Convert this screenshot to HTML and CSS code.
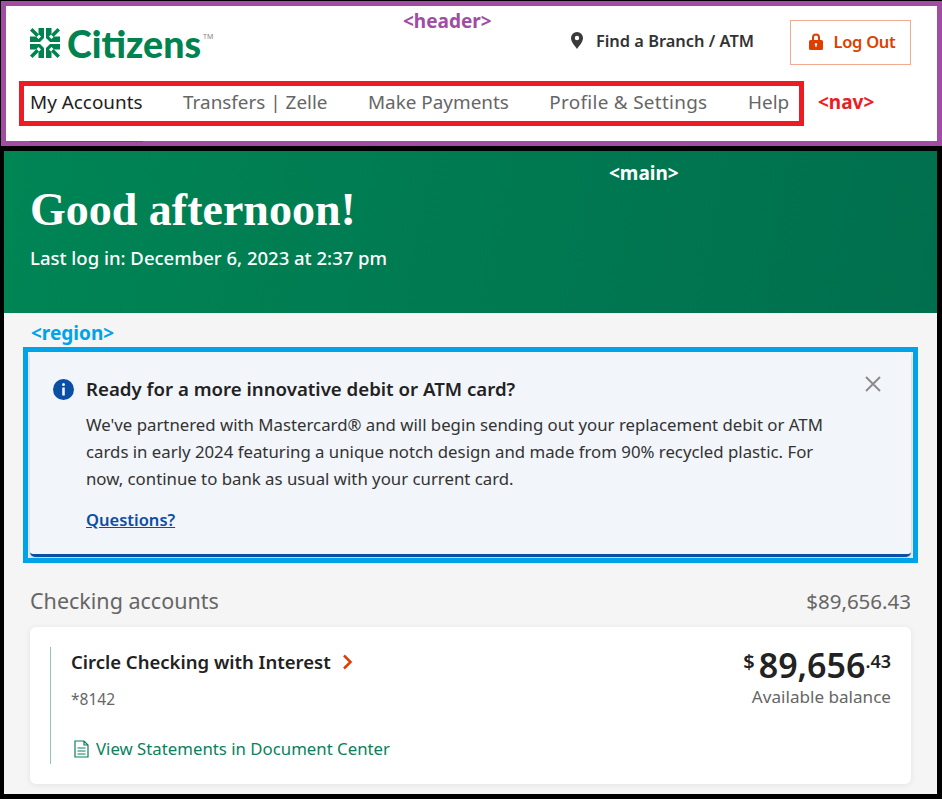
FILE: index.html
```html
<!DOCTYPE html>
<html lang="en">
  <head>
    <meta charset="utf-8">
    <title>Citizens - My Accounts</title>
    <link rel="stylesheet" href="styles.css">
  </head>
  <body>
    <header class="site-header">
      <span class="tag tag-header">&lt;header&gt;</span>
      <div class="top-row">
        <a class="logo">
          <svg class="logo-mark" width="30" height="30" viewBox="0 0 30 30">
            <g id="petal">
              <path d="M0 2.500 L2.500 0 L9 6.500 L6.500 9 z"/>
              <path d="M8.500 0 H14 V10 L10 14 H0 V8.500 H6 L8.500 11 L11 8.500 L8.500 6 z"/>
            </g>
            <use href="#petal" transform="matrix(-1 0 0 1 30 0)"/>
            <use href="#petal" transform="matrix(1 0 0 -1 0 30)"/>
            <use href="#petal" transform="matrix(-1 0 0 -1 30 30)"/>
          </svg>
          <span class="logo-name">Citizens</span><span class="logo-tm">TM</span>
        </a>
        <a class="branch-link">
          <svg width="12" height="17" viewBox="0 0 12 17"><path d="M6 0 a6 6 0 0 1 6 6 c0 4 -4 8 -6 11 c-2 -3 -6 -7 -6 -11 a6 6 0 0 1 6 -6 z M6 3.800 a2.200 2.200 0 1 0 0 4.400 a2.200 2.200 0 0 0 0 -4.400 z" fill-rule="evenodd"/></svg>
          Find a Branch / ATM
        </a>
        <a class="logout">
          <svg width="14" height="17" viewBox="0 0 14 17"><path d="M3 7 V4.500 a4 4 0 0 1 8 0 V7 h1.500 a1.500 1.500 0 0 1 1.500 1.500 v7 a1.500 1.500 0 0 1 -1.500 1.500 h-11 a1.500 1.500 0 0 1 -1.500 -1.500 v-7 a1.500 1.500 0 0 1 1.500 -1.500 z M5 7 h4 V4.500 a2 2 0 0 0 -4 0 z M7 10 a1.300 1.300 0 0 0 -0.600 2.400 v1.600 h1.200 v-1.600 a1.300 1.300 0 0 0 -0.600 -2.400 z" fill-rule="evenodd"/></svg>
          Log Out
        </a>
      </div>
      <div class="nav-row">
        <nav class="main-nav">
          <a class="active">My Accounts</a>
          <a>Transfers | Zelle</a>
          <a>Make Payments</a>
          <a class="wide">Profile &amp; Settings</a>
          <a>Help</a>
        </nav>
        <span class="tag tag-nav">&lt;nav&gt;</span>
      </div>
    </header>

    <main class="content">
      <span class="tag tag-main">&lt;main&gt;</span>
      <section class="hero">
        <h1>Good afternoon!</h1>
        <p>Last log in: December 6, 2023 at 2:37 pm</p>
      </section>

      <div class="accounts">
        <span class="tag tag-region">&lt;region&gt;</span>
        <div class="region">
          <div class="notice">
            <svg class="notice-icon" width="21" height="21" viewBox="0 0 21 21"><path d="M10.500 0 a10.500 10.500 0 1 1 0 21 a10.500 10.500 0 0 1 0 -21 z M10.500 4 a1.500 1.500 0 1 0 0 3 a1.500 1.500 0 0 0 0 -3 z M9.200 8.500 v8 h2.600 v-8 z" fill-rule="evenodd"/></svg>
            <div class="notice-body">
              <h2>Ready for a more innovative debit or ATM card?</h2>
              <p>We've partnered with Mastercard® and will begin sending out your replacement debit or ATM cards in early 2024 featuring a unique notch design and made from 90% recycled plastic. For now, continue to bank as usual with your current card.</p>
              <a class="questions">Questions?</a>
            </div>
            <svg class="notice-close" width="16" height="16" viewBox="0 0 16 16"><path d="M1 1 L15 15 M15 1 L1 15"/></svg>
          </div>
        </div>

        <div class="group-head">
          <span>Checking accounts</span>
          <span class="group-total">$89,656.43</span>
        </div>

        <article class="account">
          <div class="account-inner">
            <div class="account-info">
              <a class="account-name">Circle Checking with Interest
                <svg width="11" height="16" viewBox="0 0 11 16"><path d="M2 1.500 L8.500 8 L2 14.500"/></svg>
              </a>
              <div class="account-num">*8142</div>
              <a class="statements">
                <svg width="15" height="18" viewBox="0 0 15 18"><path d="M1 1 h9 l4 4 v12 h-13 z M10 1 v4 h4 M3.500 8 h8 M3.500 11 h8 M3.500 14 h8"/></svg>
                View Statements in Document Center
              </a>
            </div>
            <div class="balance">
              <div class="amount"><span class="cur">$</span><span class="whole">89,656</span><span class="cents">.43</span></div>
              <div class="balance-label">Available balance</div>
            </div>
          </div>
        </article>
      </div>
    </main>
  </body>
</html>
```

FILE: styles.css
```css
html { background: #000; }
body { margin: 0; height: 799px; overflow: hidden; color: #222; font-family: "Noto Sans", sans-serif; }
a { cursor: pointer; }

/* the coloured labels and outlines drawn over the page */
.tag { position: absolute; font-size: 19px; font-weight: 700; line-height: 24px; white-space: nowrap; }
.tag-header { left: 397px; top: 3px; color: #a04da3; }
.tag-nav { left: 812px; top: 84px; color: #ed1c24; }
.tag-main { left: 605px; top: 10px; color: #fff; }
.tag-region { left: 27px; top: 8px; color: #00a2e8; }

.site-header { position: relative; height: 135px; margin: 1px 0 5px 1px; background: #fff; border: 5px solid #a04da3; }
.top-row { display: flex; align-items: center; height: 45px; padding: 14px 26px 0 24px; }
.logo { display: flex; align-items: center; color: #00834f; padding-top: 1px; }
.logo-mark { fill: #00834f; margin-right: 7px; }
.logo-name { font-family: "Lato", sans-serif; font-weight: 900; font-size: 37.500px; line-height: 45px; }
.logo-tm { font-size: 7px; margin: -14px 0 0 2px; color: #888; }
.branch-link { display: flex; align-items: center; gap: 13px; margin-left: auto; font-size: 16.400px; font-weight: 600; color: #333; padding-bottom: 4px; }
.branch-link svg { fill: #3a3a3a; }
.logout { display: flex; align-items: center; justify-content: center; gap: 11px; width: 116px; height: 41px; margin-left: 36px; border: 1px solid #f0ab92; font-size: 16.500px; letter-spacing: -.3px; font-weight: 600; color: #de3f00; padding: 0 0 2px 3px; }
.logout svg { fill: #de3f00; }

.nav-row { display: flex; align-items: center; margin-top: 16px; padding-left: 13px; }
.main-nav { display: flex; gap: 40.500px; height: 31px; padding: 0 10px 4px 6px; border: 5px solid #ed1c24; align-items: center; }
.main-nav a { position: relative; font-size: 18.900px; color: #666; white-space: nowrap; }
.main-nav a.wide { letter-spacing: .3px; }
.main-nav a.active { color: #222; }
.main-nav a.active::after { content: ""; position: absolute; left: 0; right: 0; top: 52px; height: 1px; background: #00834f; }

.content { position: relative; height: 643px; margin: 0 5px 0 4px; background: #f5f5f5; }
.hero { height: 162px; padding: 0 26px; box-sizing: border-box; background: linear-gradient(100deg, #008555, #006f4d); color: #fff; overflow: hidden; }
.hero h1 { margin: 30px 0 0; font-family: "Liberation Serif", serif; font-size: 46px; font-weight: 700; line-height: 58px; }
.hero p { margin: 5px 0 0; font-size: 18.500px; font-weight: 500; line-height: 28px; }

.accounts { position: relative; padding: 39px 26px 0; }
.region { margin: 0 -2px; padding: 0 2px 1px; outline: 5px solid #00a2e8; position: relative; }
.notice { display: flex; height: 205px; box-sizing: border-box; padding: 25px 20px 0 23px; background: #f2f5fa; border-bottom: 3px solid #0a4ea6; border-radius: 0 0 5px 5px; box-shadow: 0 2px 6px rgba(0, 0, 0, .2); }
.notice-icon { flex: none; fill: #0a4ea6; margin: 2px 12px 0 0; }
.notice-body { flex: 1; }
.notice-body h2 { margin: 0; font-size: 18.650px; font-weight: 600; line-height: 24px; color: #222; }
.notice-body p { margin: 10px 0 0; font-size: 16.800px; line-height: 27px; color: #333; max-width: 750px; }
.questions { display: inline-block; margin-top: 14px; font-size: 16.500px; font-weight: 600; line-height: 27px; color: #0a4ea6; text-decoration: underline; }
.notice-close { flex: none; margin: -1px 10px 0 0; fill: none; stroke: #8c8c8c; stroke-width: 2; }

.group-head { display: flex; justify-content: space-between; margin-top: 29px; font-size: 21.500px; line-height: 28px; color: #666; }
.group-total { font-size: 20.500px; }
.account { margin-top: 12px; height: 157px; box-sizing: border-box; padding: 20px; background: #fff; border-radius: 6px; box-shadow: 0 1px 6px rgba(0, 0, 0, .08); }
.account-inner { display: flex; justify-content: space-between; height: 117px; }
.account-info { padding-left: 20px; border-left: 1px solid #8ecbb0; }
.account-name { display: flex; align-items: center; gap: 11px; font-size: 18.500px; font-weight: 600; line-height: 30px; color: #222; }
.account-name svg { fill: none; stroke: #de3f00; stroke-width: 2.500; }
.account-num { margin-top: 7px; font-size: 15.500px; line-height: 30px; color: #666; }
.statements { display: flex; align-items: center; gap: 7px; margin: 20px 0 0 3px; font-size: 16.800px; line-height: 30px; color: #0b7f5e; }
.statements svg { fill: none; stroke: #0b7f5e; stroke-width: 1.200; }
.balance { text-align: right; }
.amount { display: flex; justify-content: flex-end; align-items: flex-start; color: #222; font-weight: 600; }
.cur { font-size: 20px; line-height: 30px; margin-right: 4px; }
.whole { font-size: 34px; line-height: 36px; }
.cents { font-size: 18px; line-height: 28px; }
.balance-label { font-size: 17.100px; line-height: 24px; color: #666; margin-top: 2px; }
```
